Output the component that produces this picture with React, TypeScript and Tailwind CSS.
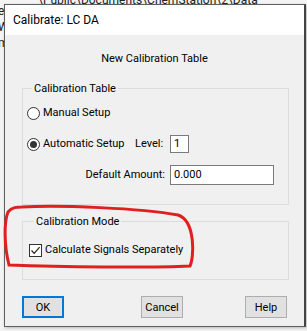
import React from 'react';

const font = { fontFamily: 'Roboto, "Liberation Sans", sans-serif' };

function Radio({ checked }: { checked?: boolean }) {
  return (
    <span className="flex h-[13px] w-[13px] shrink-0 items-center justify-center rounded-full border border-[#333] bg-white">
      {checked && <span className="h-[7px] w-[7px] rounded-full bg-[#333]" />}
    </span>
  );
}

function Checkbox() {
  return (
    <span className="flex h-[13px] w-[13px] shrink-0 items-center justify-center border border-[#333] bg-white">
      <svg width="11" height="11" viewBox="0 0 11 11">
        <path d="M1.5 5.5 L4.2 8.3 L9.6 2.2" fill="none" stroke="#222" strokeWidth="1.2" />
      </svg>
    </span>
  );
}

function Group({ title, className, children }: { title: string; className?: string; children: React.ReactNode }) {
  return (
    <fieldset className={`ml-[17px] mr-[15px] border border-[#dcdcdc] ${className ?? ''}`}>
      <legend className="ml-[5px] px-[2px] leading-[13px]">{title}</legend>
      {children}
    </fieldset>
  );
}

function Btn({ label, primary, className }: { label: string; primary?: boolean; className?: string }) {
  return (
    <button
      className={`h-[22px] w-[42px] bg-[#e1e1e1] leading-none ${
        primary ? 'border-2 border-[#0078d7]' : 'border border-[#adadad]'
      } ${className ?? ''}`}
    >
      {label}
    </button>
  );
}

export default function App() {
  return (
    <div className="relative h-[331px] w-[307px] overflow-hidden bg-[#f4f4f4] text-[11px] text-black" style={font}>
      {/* background window behind the dialog */}
      <div className="absolute left-[38px] top-[-6px] whitespace-nowrap text-[12px] leading-[12px] text-[#222]">
        \Public\Documents\ChemStation\2\Data
      </div>
      <div className="absolute left-[-2px] top-[3px] text-[12px] leading-[16px] text-[#222]">
        e<br />W<br />m
      </div>

      {/* dialog */}
      <div className="relative ml-[4px] mt-[4px] w-[302px] border border-[#5f5f5f] border-r-2 border-r-[#444] bg-[#f0f0f0] shadow-[1px_1px_3px_rgba(0,0,0,0.25)]">
        <div className="flex h-[30px] items-center bg-white pl-[8px] text-[12px]">Calibrate: LC DA</div>

        <div className="mt-[17px] text-center leading-[13px]">New Calibration Table</div>

        <Group title="Calibration Table" className="mt-[17px] pb-[19px] pl-[4px]">
          <div className="mt-[11px] flex h-[14px] items-center gap-[3px]">
            <Radio />
            <span>Manual Setup</span>
          </div>
          <div className="mt-[15px] flex h-[18px] items-center">
            <div className="flex w-[108px] items-center gap-[3px]">
              <Radio checked />
              <span>Automatic Setup</span>
            </div>
            <span className="w-[35px]">Level:</span>
            <div className="flex h-[18px] w-[19px] items-center border border-[#7a7a7a] bg-white pl-[3px]">1</div>
          </div>
          <div className="mt-[12px] flex h-[20px] items-center">
            <span className="w-[139px] pr-[1px] text-right">Default Amount:</span>
            <div className="ml-[4px] flex h-[20px] w-[104px] items-center border border-[#7a7a7a] bg-white pl-[3px]">0.000</div>
          </div>
        </Group>

        <Group title="Calibration Mode" className="mt-[10px] pb-[22px] pl-[6px]">
          <div className="mt-[15px] flex h-[14px] items-center gap-[3px]">
            <Checkbox />
            <span>Calculate Signals Separately</span>
          </div>
        </Group>

        <div className="mt-[16px] flex pb-[8px]">
          <Btn label="OK" primary className="ml-[17px]" />
          <Btn label="Cancel" className="ml-[77px]" />
          <Btn label="Help" className="ml-[62px]" />
        </div>
      </div>

      {/* red annotation */}
      <svg className="pointer-events-none absolute left-0 top-0" width="307" height="331">
        <path
          d="M22 207 C60 205, 140 208, 178 215 C196 221, 194 258, 190 266 C150 268, 60 267, 9 265 C4 245, 4 222, 8 212 C12 207, 17 207, 22 207"
          fill="none"
          stroke="#e01f1f"
          strokeWidth="3"
          strokeLinecap="round"
        />
      </svg>
    </div>
  );
}
